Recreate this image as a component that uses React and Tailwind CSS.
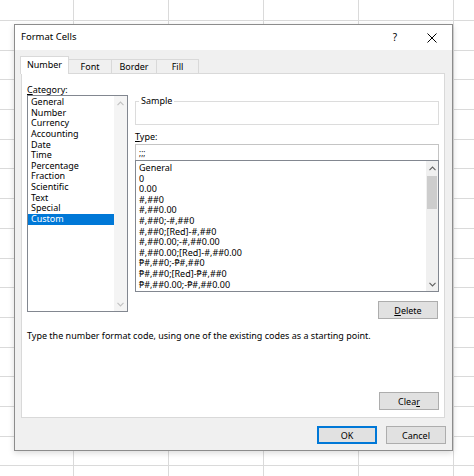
import React from "react";

const categories = [
  "General",
  "Number",
  "Currency",
  "Accounting",
  "Date",
  "Time",
  "Percentage",
  "Fraction",
  "Scientific",
  "Text",
  "Special",
  "Custom",
];

const formats = [
  "General",
  "0",
  "0.00",
  "#,##0",
  "#,##0.00",
  "#,##0;-#,##0",
  "#,##0;[Red]-#,##0",
  "#,##0.00;-#,##0.00",
  "#,##0.00;[Red]-#,##0.00",
  "₱#,##0;-₱#,##0",
  "₱#,##0;[Red]-₱#,##0",
  "₱#,##0.00;-₱#,##0.00",
];

const colWidths = ["w-[74px]", "w-[95px]", "w-[95px]", "w-[95px]", "w-[95px]", "w-[95px]"];

const Chevron = ({ up, color = "#000" }) => (
  <svg width="7" height="5" viewBox="0 0 7 5" className="block">
    <polyline
      points={up ? "0.5,4.2 3.5,1 6.5,4.2" : "0.5,0.8 3.5,4 6.5,0.8"}
      fill="none"
      stroke={color}
      strokeWidth="1.1"
    />
  </svg>
);

const Button = ({ children, primary, className = "" }) => (
  <div
    className={`h-[18px] w-[60px] flex items-center justify-center bg-[#e1e1e1] text-[9px] leading-none text-black ${
      primary ? "border-2 border-[#0078d7]" : "border border-[#adadad]"
    } ${className}`}
  >
    {children}
  </div>
);

const SheetGrid = () => (
  <div className="flex flex-col">
    {Array.from({ length: 17 }).map((_, r) => (
      <div key={r} className={`flex shrink-0 ${r === 0 ? "h-[21px]" : "h-[29.7px]"}`}>
        {colWidths.map((w, c) => (
          <div key={c} className={`${w} shrink-0 border-r border-b border-[#dadada]`} />
        ))}
      </div>
    ))}
  </div>
);

const App = () => {
  return (
    <div
      className="relative w-[474px] h-[476px] overflow-hidden bg-white text-black"
      style={{ fontFamily: '"Noto Sans", "DejaVu Sans", sans-serif' }}
    >
      <SheetGrid />

      {/* dialog */}
      <div className="absolute left-[14px] top-[24px] w-[439px] h-[427px] flex flex-col border border-[#8c8c8c] bg-[#f0f0f0] shadow-[0_2px_6px_rgba(0,0,0,0.15)]">
        {/* title bar */}
        <div className="h-[25px] shrink-0 bg-white flex items-center pl-[6px] pr-[15px]">
          <span className="text-[9.5px]">Format Cells</span>
          <span className="ml-auto text-[10px] mr-[30px]">?</span>
          <svg width="10" height="10" viewBox="0 0 10 10">
            <path d="M0.5 0.5 L9.5 9.5 M9.5 0.5 L0.5 9.5" stroke="#000" strokeWidth="1" />
          </svg>
        </div>

        {/* tabs */}
        <div className="relative z-10 flex items-end h-[18px] mt-[6px] pl-[5px] text-[9px]">
          <div className="h-[18px] w-[49px] flex items-center justify-center bg-white border border-b-0 border-[#d9d9d9] pb-[1px]">
            Number
          </div>
          <div className="h-[15px] w-[43px] flex items-center justify-center border border-l-0 border-b-0 border-[#d9d9d9]">
            Font
          </div>
          <div className="h-[15px] w-[45px] flex items-center justify-center border border-l-0 border-b-0 border-[#d9d9d9]">
            Border
          </div>
          <div className="h-[15px] w-[42px] flex items-center justify-center border border-l-0 border-b-0 border-[#d9d9d9]">
            Fill
          </div>
        </div>

        {/* panel */}
        <div className="-mt-px ml-[6px] w-[424px] h-[345px] shrink-0 bg-white border border-[#d9d9d9] flex flex-col pl-[5px] pr-[4px] pt-[10px] pb-[7px] text-[9px]">
          <div className="flex">
            {/* category */}
            <div className="w-[101px] flex flex-col">
              <div className="h-[11px] leading-[11px]">
                <span className="underline">C</span>ategory:
              </div>
              <div className="h-[217px] border border-[#828790] flex">
                <div className="w-[86px] pt-[1px] leading-[10.65px]">
                  {categories.map((c) => (
                    <div
                      key={c}
                      className={`h-[10.65px] pl-[3px] ${
                        c === "Custom" ? "bg-[#0078d7] text-white" : ""
                      }`}
                    >
                      {c}
                    </div>
                  ))}
                </div>
                <div className="flex-1 bg-[#f4f4f4] flex flex-col items-center justify-between pt-[5px] pb-[4px]">
                  <Chevron up color="#c2c2c2" />
                  <Chevron color="#c2c2c2" />
                </div>
              </div>
            </div>

            {/* type */}
            <div className="w-[304px] ml-[7px] flex flex-col">
              <div className="relative mt-[17px] h-[24px] border border-[#dcdcdc]">
                <span className="absolute -top-[7px] left-[3px] bg-white px-[2px] leading-[11px]">
                  Sample
                </span>
              </div>
              <div className="mt-[6px] h-[11px] leading-[11px]">
                <span className="underline">T</span>ype:
              </div>
              <div className="mt-[2px] h-[16px] border border-b-0 border-[#c4c4c4] flex items-center pl-[3px] text-[8px]">
                ;;;
              </div>
              <div className="h-[132px] border border-[#828790] flex">
                <div className="flex-1 pt-[2px] pl-[3px] leading-[10.6px]">
                  {formats.map((f) => (
                    <div key={f} className="h-[10.6px] whitespace-nowrap">
                      {f}
                    </div>
                  ))}
                </div>
                <div className="w-[12px] bg-[#f0f0f0] flex flex-col">
                  <div className="h-[15px] flex items-center justify-center">
                    <Chevron up color="#606060" />
                  </div>
                  <div className="mx-[1px] h-[33px] bg-[#cdcdcd]" />
                  <div className="mt-auto h-[14px] flex items-center justify-center">
                    <Chevron color="#606060" />
                  </div>
                </div>
              </div>
              <Button className="mt-[9px] self-end mr-[1px]">
                <span className="underline">D</span>elete
              </Button>
            </div>
          </div>

          <div className="mt-[11px] h-[11px] leading-[11px]">
            Type the number format code, using one of the existing codes as a starting point.
          </div>

          <Button className="mt-auto self-end mr-[1px]">
            Clea<span className="underline">r</span>
          </Button>
        </div>

        {/* footer */}
        <div className="flex justify-end gap-[9px] mt-[8px] pr-[6px]">
          <Button primary>OK</Button>
          <Button>Cancel</Button>
        </div>
      </div>
    </div>
  );
};

export default App;
